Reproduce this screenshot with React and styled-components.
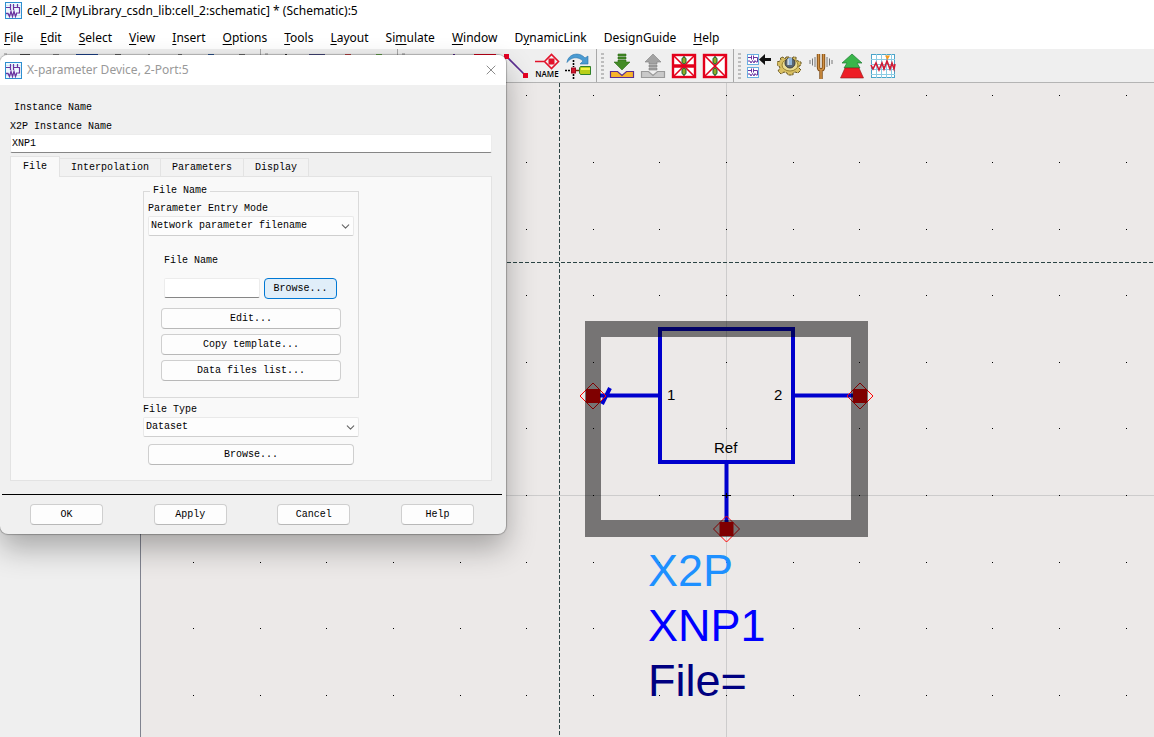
import React, { useState } from "react";
import styled, { createGlobalStyle } from "styled-components";
import { ChevronDown, X } from "lucide-react";

const GlobalStyle = createGlobalStyle`
  * {
    box-sizing: border-box;
  }
  body {
    margin: 0;
    background: #efefef;
    font-family: "Noto Sans", "Open Sans", sans-serif;
    font-size: 12px;
    color: #000;
  }
`;

const Page = styled.div`
  display: flex;
  flex-direction: column;
  min-height: 100vh;
  position: relative;
  overflow: hidden;
`;

const TitleBar = styled.header`
  display: flex;
  align-items: center;
  gap: 5px;
  height: 21px;
  padding-left: 5px;
  background: #fff;
  white-space: nowrap;
`;

const MenuBar = styled.nav`
  display: flex;
  align-items: center;
  gap: 17px;
  height: 28px;
  padding: 5px 4px 0;
  background: #fff;
`;

const MenuItem = styled.a`
  color: #000;
  line-height: 20px;
  text-decoration: none;

  u {
    text-underline-offset: 2px;
  }
`;

const ToolBar = styled.div`
  display: flex;
  height: 34px;
  background: #efefef;
  border-bottom: 1px solid #b4b4b4;
`;

const ToolGroup = styled.div`
  display: flex;
  align-items: center;
  gap: 5px;
  padding-right: 5px;
  border-right: ${(props) => (props.$last ? "none" : "1px solid #a8a8a8")};
`;

const Grip = styled.span`
  width: 3px;
  height: 26px;
  margin-left: 4px;
  background: repeating-linear-gradient(#bdbdbd 0 2px, #efefef 2px 4px);
`;

const ToolButton = styled.button`
  display: flex;
  justify-content: center;
  width: 26px;
  height: 26px;
  padding: 0;
  border: none;
  background: none;
`;

const Workspace = styled.main`
  display: flex;
  flex: 1;
`;

const SidePanel = styled.aside`
  width: 141px;
  flex-shrink: 0;
  background: #efefef;
  border-right: 1px solid #80838f;
`;

const Canvas = styled.svg`
  flex: 1;
  min-width: 0;
  background: #ece9e8;
  font-family: "Liberation Sans", Arial, sans-serif;
`;

const Dialog = styled.section`
  position: absolute;
  top: 55px;
  left: 0;
  width: 506px;
  background: #f0f0f0;
  border-radius: 8px;
  box-shadow: 0 0 1px 1px rgba(0, 0, 0, 0.25), 0 14px 30px rgba(0, 0, 0, 0.3);
  font-family: "Liberation Mono", "Courier New", monospace;
  font-size: 10px;
  line-height: 14px;
`;

const DialogTitle = styled.div`
  display: flex;
  align-items: center;
  gap: 5px;
  height: 30px;
  padding: 0 7px 0 5px;
  background: #fff;
  border-radius: 8px 8px 0 0;
  color: #999;
  font-family: "Noto Sans", "Open Sans", sans-serif;
  font-size: 12px;
`;

const CloseButton = styled.button`
  display: flex;
  margin-left: auto;
  padding: 0;
  border: none;
  background: none;
  color: #8c8c8c;
`;

const DialogBody = styled.div`
  padding: 16px 14px 13px 10px;
`;

const Heading = styled.div`
  padding-left: 4px;
  margin-bottom: 5px;
`;

const Label = styled.label`
  display: block;
`;

const TextInput = styled.input`
  width: ${(props) => props.$width || "100%"};
  height: ${(props) => props.$height || "20px"};
  padding: 0 1px;
  border: 1px solid #ececec;
  border-bottom-color: #868686;
  border-radius: 2px;
  background: #fff;
  font: inherit;
  outline: none;
`;

const TabList = styled.div`
  display: flex;
  align-items: flex-end;
  height: 21px;
  margin-top: 2px;
`;

const Tab = styled.button`
  height: ${(props) => (props.$active ? "21px" : "18px")};
  margin-bottom: ${(props) => (props.$active ? "-1px" : "0")};
  padding: 0 ${(props) => (props.$active ? "12px" : "11px")};
  border: 1px solid #e3e3e3;
  border-left-width: ${(props) => (props.$active ? "1px" : "0")};
  border-bottom: none;
  background: ${(props) => (props.$active ? "#f9f9f9" : "#f2f2f2")};
  font: inherit;
`;

const TabPanel = styled.div`
  padding: 8px 132px 15px;
  border: 1px solid #e3e3e3;
  background: #f9f9f9;
`;

const Group = styled.fieldset`
  min-width: 0;
  margin: 0 0 5px;
  padding: 5px 4px 16px;
  border: 1px solid #dadada;
`;

const Legend = styled.legend`
  margin-left: 2px;
  padding: 0 3px;
  line-height: 12px;
`;

const SelectBox = styled.div`
  display: grid;
  align-items: center;

  > * {
    grid-area: 1 / 1;
  }

  svg {
    justify-self: end;
    margin-right: 2px;
    color: #666;
    pointer-events: none;
  }
`;

const Select = styled.select`
  width: 100%;
  height: 20px;
  padding: 0 2px;
  border: 1px solid #e9e9e9;
  border-bottom-color: #cfcfcf;
  border-radius: 2px;
  background: #fdfdfd;
  color: #000;
  font: inherit;
  appearance: none;
`;

const FileBlock = styled.div`
  display: flex;
  flex-direction: column;
  gap: 5px;
  padding: 18px 13px 0;
`;

const FileLabel = styled(Label)`
  padding: 0 3px;
`;

const FileRow = styled.div`
  display: flex;
  gap: 4px;
  margin: 5px 0 4px;
  padding: 0 3px;
`;

const Button = styled.button`
  width: ${(props) => props.$width || "100%"};
  flex-shrink: 0;
  height: 21px;
  padding: 0;
  border: 1px solid ${(props) => (props.$primary ? "#0078d4" : "#cfcfcf")};
  border-bottom-color: ${(props) => (props.$primary ? "#0078d4" : "#b8b8b8")};
  border-radius: 4px;
  background: ${(props) => (props.$primary ? "#e0eef9" : "#fdfdfd")};
  color: #000;
  font: inherit;
`;

const TypeAction = styled.div`
  padding: 7px 5px 0;
`;

const Footer = styled.div`
  display: flex;
  justify-content: space-between;
  margin: 0 4px 0 2px;
  padding: 9px 28px;
  border-top: 1px solid #000;
`;

const menus = [
  ["", "F", "ile"],
  ["", "E", "dit"],
  ["", "S", "elect"],
  ["", "V", "iew"],
  ["", "I", "nsert"],
  ["", "O", "ptions"],
  ["", "T", "ools"],
  ["", "L", "ayout"],
  ["Si", "m", "ulate"],
  ["", "W", "indow"],
  ["D", "y", "namicLink"],
  ["DesignGuide", "", ""],
  ["", "H", "elp"],
];

const SchematicIcon = () => (
  <svg width="17" height="17" viewBox="0 0 17 17" fill="none">
    <rect x=".5" y=".5" width="16" height="16" fill="#eef8fe" stroke="#2f8fd0" />
    <path d="M1 3.500h15M1 13.500h15" stroke="#cfe9f7" />
    <path d="M1 5.500h4M5.500 2v6M8.500 2v6M9 5.500h3M12.500 2v4M12.500 5.500h2v5.500h-2" stroke="#6a35a0" strokeWidth="1.200" />
    <path d="M1 11.500h2l1.500 3 1.500-5 1.500 5L9 9.500l1.500 5 1.500-4" stroke="#6a35a0" strokeWidth="1.300" />
  </svg>
);

// plain block glyph for the file and edit tools
const BlockIcon = ({ width, color }) => (
  <svg width="26" height="26" viewBox="0 0 26 26">
    <rect x={13 - width / 2} y="1" width={width} height="24" fill={color} />
  </svg>
);

const WireIcon = () => (
  <svg width="26" height="26" viewBox="0 0 26 26">
    <path d="M3 3l19 19" stroke="#5b2d91" strokeWidth="1.600" />
    <path d="M1 1h5v5H1zM20 20h5v5h-5z" fill="#e60023" />
  </svg>
);

const NameIcon = () => (
  <svg width="26" height="26" viewBox="0 0 26 26">
    <path d="M1 8.500h10M10.500 8.500l7-7 7 7-7 7z" fill="none" stroke="#e2122a" strokeWidth="1.600" />
    <path d="M14.500 5.500h6v6h-6z" fill="#e2122a" />
    <text x="13" y="24" textAnchor="middle" fontFamily="Open Sans, sans-serif" fontSize="8" fontWeight="600">NAME</text>
  </svg>
);

const PinIcon = () => (
  <svg width="26" height="26" viewBox="0 0 26 26">
    <path d="M2 9.500C3 1 14-2 20 5l3-2v8h-8l3-3C13 3 6 4 2 9.500z" fill="#4a9bd2" stroke="#2874ac" strokeWidth=".6" />
    <path d="M0 17.500h7M8.500 7v7M8.500 21v5" stroke="#000" strokeWidth="1.600" strokeDasharray="2 1" />
    <path d="M11 17.500h4" stroke="#7a2a00" strokeWidth="1.500" />
    <rect x="6.500" y="15" width="4" height="5" fill="#d3122a" stroke="#9b0d1f" />
    <path d="M15.500 13.500h10v8h-10l-1-1.500v-5z" fill="#b9cf18" stroke="#31812a" />
    <path d="M16 16h9" stroke="#f4f34a" strokeWidth="2" />
  </svg>
);

const HierarchyIcon = ({ up }) => (
  <svg width="26" height="26" viewBox="0 0 26 26">
    {up ? (
      <path d="M13 1l8 8h-4v2H9V9H5zM9 12h8v2H9zM9 15h8v2H9z" fill="#a3a3a3" stroke="#818181" strokeWidth=".6" />
    ) : (
      <path d="M9 1h8v2H9zM9 4h8v2H9zM9 7h8v2h4l-8 8-8-8h4z" fill="#438b26" stroke="#2e6b19" strokeWidth=".6" />
    )}
    <path
      d="M1.500 18.500h7l4.500 4 4.500-4h7v6h-23z"
      fill={up ? "#c9c9c9" : "#f8b42c"}
      stroke={up ? "#9a9a9a" : "#5b2d91"}
      strokeWidth="1.200"
    />
  </svg>
);

const DeactivateIcon = ({ short }) => (
  <svg width="26" height="26" viewBox="0 0 26 26">
    <rect x="2" y="2" width="22" height="22" fill="#fff" stroke="#e3001b" strokeWidth="2.400" />
    <path d="M13 3v20" stroke="#1f5d30" strokeWidth="1.400" />
    <path d="M3 3l20 20M23 3L3 23" stroke="#e3001b" strokeWidth="1.600" />
    <rect x="11" y="4.500" width="4" height="6" rx="1.500" fill="#8fae25" stroke="#1f5d30" />
    <rect x="11" y="15.500" width="4" height="6" rx="1.500" fill="#8fae25" stroke="#1f5d30" />
    {short && <path d="M2 13h22" stroke="#e3001b" strokeWidth="3.500" />}
  </svg>
);

const CompareIcon = () => (
  <svg width="26" height="26" viewBox="0 0 26 26">
    {[1, 14].map((y) => (
      <g key={y} transform={`translate(1 ${y})`} fill="none">
        <rect x=".5" y=".5" width="11" height="10" fill="#fff" stroke="#69afe0" />
        <path d="M1 3.500h3M4.500 1.500v4M6.500 1.500v4M7 3.500h3.500V8H9L8 6.500 7 9 5.500 6.500 4 9 3 7H1" stroke="#6a35a0" />
      </g>
    ))}
    <path d="M13 6.500l6-5.500v4h6v3h-6v4z" fill="#111" />
  </svg>
);

const GearIcon = () => (
  <svg width="26" height="26" viewBox="0 0 26 26">
    <path
      d="M9 4h3l1 2h2l1-2h3v3l2 1 3 1v3l-2 1v2l2 2-3 3-3-1-2 1v2h-5l-1-2-3-1-3 2-3-3 2-3-1-2-2-1V9l3-1 1-2-1-1 3-1 2 2z"
      fill="#d8bf62"
      stroke="#675522"
      strokeDasharray="3 1"
    />
    <ellipse cx="13" cy="12" rx="8" ry="6" fill="#eadc93" stroke="#99812f" />
    <ellipse cx="13" cy="10" rx="5" ry="5" fill="#5b6772" stroke="#3e3e3e" />
    <path d="M11 5h4v7h-4z" fill="#8eb4d9" />
    <path d="M11 6v6" stroke="#fff" />
  </svg>
);

const TuneIcon = () => (
  <svg width="26" height="26" viewBox="0 0 26 26" fill="none">
    <path d="M10.500 1v13q0 3 2.500 3t2.500-3V1M13 17v9" stroke="#7d4a13" strokeWidth="3.400" />
    <path d="M10.500 1v13q0 3 2.500 3t2.500-3V1M13 17v9" stroke="#d29144" strokeWidth="1.600" />
    <path d="M7 4v10M4.500 5.500v7M2 7v4M19 4v10M21.500 5.500v7M24 7v4" stroke="#777" />
  </svg>
);

const OptimizeIcon = () => (
  <svg width="26" height="26" viewBox="0 0 26 26">
    <path d="M13 1l10 9h-5l3 5H5l3-5H3z" fill="#39b54a" stroke="#1d7b32" strokeWidth=".7" />
    <path d="M6 15h14l4.500 10h-23z" fill="#ed1c24" stroke="#8e1c1c" strokeWidth=".6" />
  </svg>
);

const PlotIcon = () => (
  <svg width="26" height="26" viewBox="0 0 26 26" fill="none">
    <rect x="1.500" y="1.500" width="23" height="23" fill="#fff" stroke="#4ba4c9" />
    <path d="M6.500 1v24M11.500 1v24M16.500 1v24M21.500 1v24M1 6.500h24M1 11.500h24M1 16.500h24M1 21.500h24" stroke="#8ccbe3" />
    <path d="M1 12l2 4 3-6 3 7 3-7 2 6 3-8 3 8 2-6 2 6 1-5" stroke="#cf1b35" strokeWidth="1.600" />
    <path d="M15 2.500h5L17.500 7z" fill="#f59a1c" />
  </svg>
);

const toolGroups = [
  [
    { label: "New", icon: <BlockIcon width={10} color="#555" /> },
    { label: "Open", icon: <BlockIcon width={6} color="#888" /> },
    { label: "Save", icon: <BlockIcon width={22} color="#204a9c" /> },
    { label: "Print", icon: <BlockIcon width={6} color="#666" /> },
    { label: "Cut", icon: <BlockIcon width={2} color="#888" /> },
    { label: "Copy", icon: <BlockIcon width={4} color="#777" /> },
    { label: "Undo", icon: <BlockIcon width={6} color="#315c9c" /> },
    { label: "Redo", icon: <BlockIcon width={6} color="#777" /> },
  ],
  [
    { label: "Zoom", icon: <BlockIcon width={2} color="#333" /> },
    { label: "Library", icon: <BlockIcon width={16} color="#4b4e87" /> },
    { label: "Pin", icon: <BlockIcon width={6} color="#c34646" /> },
    { label: "Ground", icon: <BlockIcon width={6} color="#69aa4f" /> },
  ],
  [
    { label: "Port", icon: <BlockIcon width={0} color="#888" /> },
    { label: "Variable", icon: <BlockIcon width={2} color="#5b2d91" /> },
    { label: "Delete", icon: <BlockIcon width={22} color="#e3001b" /> },
    { label: "Insert wire", icon: <WireIcon /> },
    { label: "Insert wire label", icon: <NameIcon /> },
    { label: "Rotate pin", icon: <PinIcon /> },
  ],
  [
    { label: "Push into hierarchy", icon: <HierarchyIcon /> },
    { label: "Pop out of hierarchy", icon: <HierarchyIcon up /> },
    { label: "Deactivate and short", icon: <DeactivateIcon short /> },
    { label: "Deactivate", icon: <DeactivateIcon /> },
  ],
  [
    { label: "Compare", icon: <CompareIcon /> },
    { label: "Simulate", icon: <GearIcon /> },
    { label: "Tune", icon: <TuneIcon /> },
    { label: "Optimize", icon: <OptimizeIcon /> },
    { label: "Data display", icon: <PlotIcon /> },
  ],
];

// grid dots are spread around the schematic origin
const ORIGIN = { x: 585, y: 412 };
const STEP = 66.6;
const dots = [];
for (let i = -8; i <= 20; i++) {
  for (let j = -6; j <= 12; j++) {
    dots.push([Math.round(ORIGIN.x + i * STEP), Math.round(ORIGIN.y + j * STEP)]);
  }
}

const Pin = ({ x, y }) => (
  <g transform={`translate(${x} ${y})`}>
    <path d="M-13 0L0-13 13 0 0 13z" fill="none" stroke="#f00" />
    <rect x="-7" y="-7" width="14" height="14" fill="#f00" />
  </g>
);

const Schematic = () => (
  <Canvas>
    <g shapeRendering="crispEdges">
      <path d={`M${ORIGIN.x + 0.5} 0v3000M0 ${ORIGIN.y + 0.5}h4000`} stroke="#cdcccc" />
      <path d="M418.500 0v3000M0 179.500h4000" stroke="#2b4444" strokeDasharray="4 2" />
      {dots.map(([x, y]) => (
        <rect key={`${x}-${y}`} x={x} y={y} width="1" height="1" />
      ))}
    </g>
    <g fill="none" stroke="#0000cd" strokeWidth="4">
      <rect x="519" y="246" width="133" height="133" />
      <path d="M452 312.500h66M653 312.500h66M585.500 380v66M461 321l8-16" />
    </g>
    <path d="M581 412.500h9M585.500 410v5" stroke="#000" />
    <Pin x={452} y={313} />
    <Pin x={719} y={313} />
    <Pin x={585.5} y={446} />
    <path d="M444 238h283v216H444zM460 254v183h250V254z" fillRule="evenodd" fillOpacity=".5" />
    <g fontSize="15">
      <text x="526" y="317">1</text>
      <text x="633" y="317">2</text>
      <text x="573" y="370">Ref</text>
    </g>
    <g fontSize="45">
      <text x="507" y="503" fill="#1e90ff">X2P</text>
      <text x="507" y="558" fill="#0000ff">XNP1</text>
      <text x="507" y="613" fill="#000080">File=</text>
    </g>
  </Canvas>
);

const DeviceDialog = () => {
  const [name, setName] = useState("XNP1");
  const [file, setFile] = useState("");

  return (
    <Dialog role="dialog" aria-labelledby="dialog-title">
      <DialogTitle>
        <SchematicIcon />
        <span id="dialog-title">X-parameter Device, 2-Port:5</span>
        <CloseButton aria-label="Close">
          <X size={16} strokeWidth={1.5} />
        </CloseButton>
      </DialogTitle>
      <DialogBody>
        <Heading>Instance Name</Heading>
        <Label htmlFor="instance">X2P Instance Name</Label>
        <TextInput id="instance" $height="19px" value={name} onChange={(e) => setName(e.target.value)} />
        <TabList role="tablist">
          <Tab role="tab" aria-selected="true" $active>File</Tab>
          <Tab role="tab">Interpolation</Tab>
          <Tab role="tab">Parameters</Tab>
          <Tab role="tab">Display</Tab>
        </TabList>
        <TabPanel role="tabpanel">
          <Group>
            <Legend>File Name</Legend>
            <Label htmlFor="mode">Parameter Entry Mode</Label>
            <SelectBox>
              <Select id="mode">
                <option>Network parameter filename</option>
              </Select>
              <ChevronDown size={13} strokeWidth={2} />
            </SelectBox>
            <FileBlock>
              <FileLabel htmlFor="file">File Name</FileLabel>
              <FileRow>
                <TextInput id="file" $width="96px" value={file} onChange={(e) => setFile(e.target.value)} />
                <Button $width="73px" $primary>Browse...</Button>
              </FileRow>
              <Button>Edit...</Button>
              <Button>Copy template...</Button>
              <Button>Data files list...</Button>
            </FileBlock>
          </Group>
          <Label htmlFor="type">File Type</Label>
          <SelectBox>
            <Select id="type">
              <option>Dataset</option>
            </Select>
            <ChevronDown size={13} strokeWidth={2} />
          </SelectBox>
          <TypeAction>
            <Button>Browse...</Button>
          </TypeAction>
        </TabPanel>
      </DialogBody>
      <Footer>
        <Button $width="73px">OK</Button>
        <Button $width="73px">Apply</Button>
        <Button $width="73px">Cancel</Button>
        <Button $width="73px">Help</Button>
      </Footer>
    </Dialog>
  );
};

const App = () => {
  return (
    <Page>
      <GlobalStyle />
      <TitleBar>
        <SchematicIcon />
        cell_2 [MyLibrary_csdn_lib:cell_2:schematic] * (Schematic):5
      </TitleBar>
      <MenuBar>
        {menus.map(([before, key, after]) => (
          <MenuItem href="#" key={before + key + after}>
            {before}
            {key && <u>{key}</u>}
            {after}
          </MenuItem>
        ))}
      </MenuBar>
      <ToolBar>
        {toolGroups.map((tools, i) => (
          <ToolGroup key={i} $last={i === toolGroups.length - 1}>
            <Grip />
            {tools.map((tool) => (
              <ToolButton key={tool.label} aria-label={tool.label}>
                {tool.icon}
              </ToolButton>
            ))}
          </ToolGroup>
        ))}
      </ToolBar>
      <Workspace>
        <SidePanel />
        <Schematic />
      </Workspace>
      <DeviceDialog />
    </Page>
  );
};

export default App;
